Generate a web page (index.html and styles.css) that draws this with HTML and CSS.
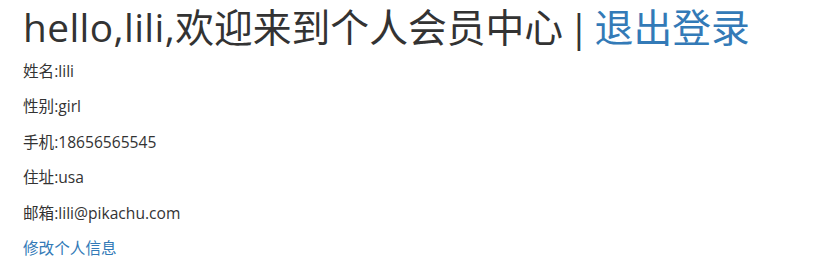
FILE: index.html
```html
<!DOCTYPE html>
<html lang="zh-CN">
<head>
    <meta charset="UTF-8">
    <title>会员中心</title>
    <link rel="stylesheet" href="styles.css">
</head>
<body>
    <div class="container">
        <h1><span class="greet">hello,lili,</span>欢迎来到个人会员中心 | <a href="#">退出登录</a></h1>
        <p>姓名:lili</p>
        <p>性别:girl</p>
        <p>手机:18656565545</p>
        <p>住址:usa</p>
        <p>邮箱:lili@pikachu.com</p>
        <a href="#">修改个人信息</a>
    </div>
</body>
</html>
```

FILE: styles.css
```css
body {
    font-family: "Open Sans", "Noto Sans CJK SC", sans-serif;
    font-size: 15.6px;
    line-height: 24px;
    color: #333;
    background-color: #fff;
    margin: 0;
}

.container {
    padding: 0 23px;
}

h1 {
    font-size: 38.8px;
    font-weight: normal;
    line-height: 44px;
    margin: 5px 0 10px;
    word-spacing: -5px;
}

h1 .greet {
    letter-spacing: 0.4px;
}

p {
    margin: 0 0 11.4px;
}

a {
    color: #337ab7;
    text-decoration: none;
}
```
